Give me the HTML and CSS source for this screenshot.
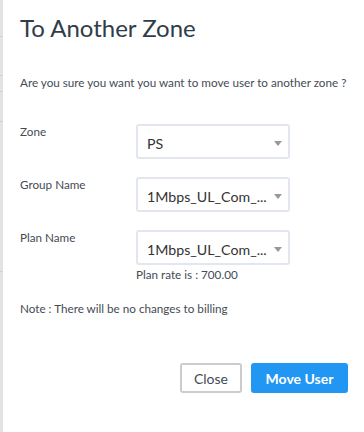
FILE: index.html
```html
<!DOCTYPE html>
<html>
<head>
<meta charset="utf-8">
<link rel="stylesheet" href="styles.css">
</head>
<body>
<div class="page">
  <div class="strip">
    <div class="seg s1"></div>
    <div class="seg s2"></div>
    <div class="seg s3"></div>
    <div class="seg s4"></div>
    <div class="seg s5"></div>
  </div>
  <div class="modal">
    <h1 class="title">To Another Zone</h1>
    <p class="question">Are you sure you want you want to move user to another zone ?</p>
    <div class="row">
      <label class="label">Zone</label>
      <div class="field">
        <div class="select"><span class="value">PS</span><span class="caret"></span></div>
      </div>
    </div>
    <div class="row">
      <label class="label">Group Name</label>
      <div class="field">
        <div class="select"><span class="value">1Mbps_UL_Com_...</span><span class="caret"></span></div>
      </div>
    </div>
    <div class="row">
      <label class="label">Plan Name</label>
      <div class="field">
        <div class="select"><span class="value">1Mbps_UL_Com_...</span><span class="caret"></span></div>
        <div class="rate">Plan rate is : 700.00</div>
      </div>
    </div>
    <p class="note">Note : There will be no changes to billing</p>
    <div class="actions">
      <button class="btn btn-close">Close</button>
      <button class="btn btn-primary">Move User</button>
    </div>
  </div>
</div>
</body>
</html>
```

FILE: styles.css
```css
html, body {
  margin: 0;
  padding: 0;
  background: #ffffff;
}
body {
  font-family: Lato, "Open Sans", sans-serif;
  color: #4a4f56;
}
.page {
  display: flex;
  width: 364px;
  height: 432px;
  overflow: hidden;
}
.strip {
  width: 3px;
  flex: none;
  background: #e3e3e3;
  display: flex;
  flex-direction: column;
}
.seg {
  border-bottom: 1px solid #d2d2d2;
}
.s1 { height: 36px; }
.s2 { height: 38px; }
.s3 { height: 15px; }
.s4 { height: 29px; }
.s5 { height: 149px; }
.modal {
  flex: 1;
  padding: 0 0 0 17px;
}
.title {
  margin: 14px 0 0 0;
  font-size: 24px;
  line-height: 28px;
  font-weight: 400;
  color: #313c4a;
}
.question {
  margin: 33px 0 0 0;
  font-size: 11.7px;
  line-height: 14px;
  color: #444b55;
}
.row {
  display: flex;
}
.question + .row { margin-top: 35px; }
.row + .row { margin-top: 18px; }
.label {
  width: 116px;
  flex: none;
  font-size: 11.7px;
  line-height: 14px;
  color: #444b55;
}
.field {
  display: flex;
  flex-direction: column;
}
.select {
  box-sizing: border-box;
  width: 154px;
  height: 35px;
  border: 2px solid #e1e6ef;
  border-radius: 3px;
  display: flex;
  align-items: flex-end;
  justify-content: space-between;
  padding: 0 6px 5px 9px;
}
.value {
  font-size: 14.2px;
  line-height: 17px;
  color: #333;
}
.caret {
  width: 0;
  height: 0;
  border-left: 4px solid transparent;
  border-right: 4px solid transparent;
  border-top: 5px solid #999;
  margin-bottom: 6px;
}
.rate {
  font-size: 11.7px;
  line-height: 14px;
  margin-top: 2px;
  color: #444b55;
}
.note {
  margin: 20px 0 0 0;
  font-size: 11.7px;
  line-height: 14px;
  color: #444b55;
}
.actions {
  display: flex;
  justify-content: flex-end;
  gap: 9px;
  margin-top: 48px;
  padding-right: 16px;
}
.btn {
  font-family: Lato, "Open Sans", sans-serif;
  font-size: 14px;
  height: 30px;
  border-radius: 3px;
  cursor: pointer;
}
.btn-close {
  width: 62px;
  background: #fff;
  border: 2px solid #cccccc;
  color: #444b55;
}
.btn-primary {
  width: 97px;
  background: #2196f3;
  border: none;
  color: #fff;
  font-weight: 700;
}
```
